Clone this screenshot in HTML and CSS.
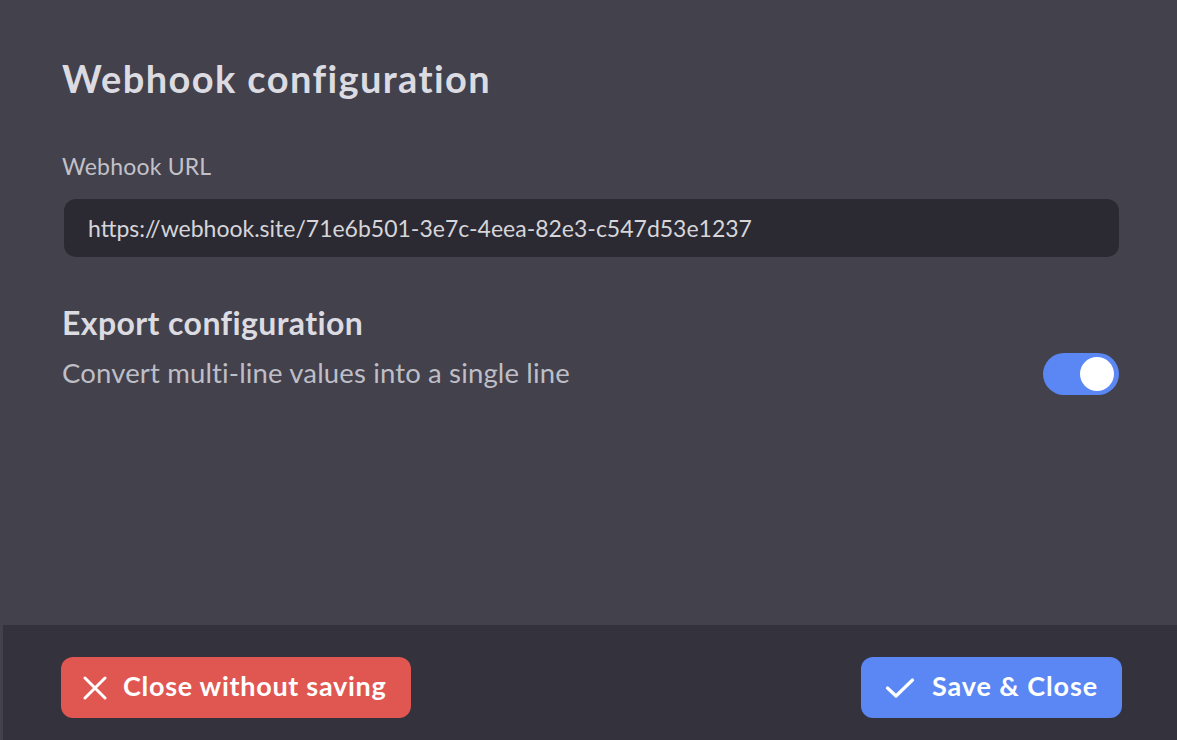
FILE: index.html
```html
<!DOCTYPE html>
<html>
<head>
<meta charset="utf-8">
<link rel="stylesheet" href="styles.css">
</head>
<body>
<div class="dialog">
  <main class="content">
    <h1 class="title">Webhook configuration</h1>
    <label class="label">Webhook URL</label>
    <div class="input">https://webhook.site/71e6b501-3e7c-4eea-82e3-c547d53e1237</div>
    <h2 class="subtitle">Export configuration</h2>
    <div class="row">
      <span class="desc">Convert multi-line values into a single line</span>
      <span class="toggle"><span class="knob"></span></span>
    </div>
  </main>
  <footer class="footer">
    <button class="btn btn-red">
      <svg class="icon-x" width="24" height="24" viewBox="0 0 24 24"><path d="M2 2 L22 22 M22 2 L2 22" stroke="#fff" stroke-width="3" stroke-linecap="round" fill="none"/></svg>
      <span class="btn-text">Close without saving</span>
    </button>
    <button class="btn btn-blue">
      <svg class="icon-check" width="30" height="22" viewBox="0 0 30 22"><path d="M2.5 11 L11 19 L27.5 3" stroke="#fff" stroke-width="3.2" stroke-linecap="round" stroke-linejoin="round" fill="none"/></svg>
      <span class="btn-text">Save &amp; Close</span>
    </button>
  </footer>
</div>
</body>
</html>
```

FILE: styles.css
```css
html, body {
  margin: 0;
  padding: 0;
  height: 100%;
  background: #42414c;
}
body {
  font-family: "Lato", "Noto Sans", sans-serif;
}
.dialog {
  height: 740px;
  display: flex;
  flex-direction: column;
}
.content {
  flex: 1;
  padding: 52px 58px 0 62px;
  display: flex;
  flex-direction: column;
}
.title {
  margin: 0;
  font-size: 38px;
  font-weight: 700;
  letter-spacing: 1.4px;
  color: #dcdbe1;
  line-height: 52px;
}
.label {
  margin-top: 47px;
  font-size: 23px;
  letter-spacing: 0.2px;
  color: #c2c1c8;
  line-height: 30px;
}
.input {
  margin-top: 18px;
  margin-left: 2px;
  height: 58px;
  border-radius: 12px;
  background: #2b2a32;
  color: #d6d5da;
  font-size: 23px;
  display: flex;
  align-items: center;
  padding-left: 24px;
}
.subtitle {
  margin: 46px 0 0 0;
  font-size: 32px;
  font-weight: 700;
  letter-spacing: 0.4px;
  color: #dcdbe1;
  line-height: 40px;
}
.row {
  display: flex;
  align-items: center;
  justify-content: space-between;
  margin-top: 10px;
}
.desc {
  font-size: 27.5px;
  letter-spacing: 0.15px;
  color: #bfbec6;
  line-height: 36px;
  margin-bottom: 3px;
}
.toggle {
  width: 76px;
  height: 42px;
  border-radius: 21px;
  background: #5b87f5;
  display: flex;
  align-items: center;
  justify-content: flex-end;
  padding-right: 5px;
  box-sizing: border-box;
}
.knob {
  width: 34px;
  height: 34px;
  border-radius: 50%;
  background: #ffffff;
}
.footer {
  height: 115px;
  margin-left: 3px;
  background: #34333d;
  display: flex;
  align-items: center;
  justify-content: space-between;
  padding: 10px 55px 0 58px;
  box-sizing: border-box;
}
.btn {
  height: 61px;
  border: none;
  border-radius: 12px;
  display: flex;
  align-items: center;
  font-family: "Lato", "Noto Sans", sans-serif;
  font-size: 27px;
  font-weight: 700;
  color: #ffffff;
  cursor: pointer;
}
.btn-text {
  padding-bottom: 4px;
}
.btn-red {
  background: #e05651;
  padding: 0 0 0 22px;
  width: 350px;
  gap: 16px;
  letter-spacing: 0.7px;
}
.btn-blue {
  background: #5b87f5;
  padding: 0 0 0 24px;
  width: 261px;
  gap: 17px;
  letter-spacing: 0.9px;
}
```
